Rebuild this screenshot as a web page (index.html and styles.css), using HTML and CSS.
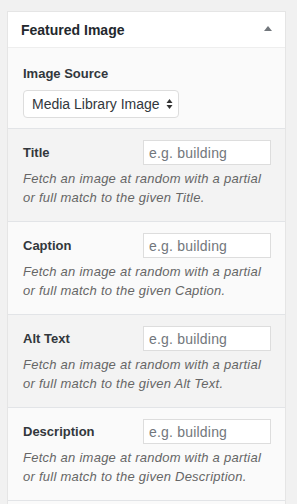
FILE: index.html
```html
<!DOCTYPE html>
<html lang="en">
<head>
  <meta charset="UTF-8">
  <meta name="viewport" content="width=device-width, initial-scale=1.0">
  <title>Featured Image</title>
  <link rel="stylesheet" href="styles.css">
</head>
<body>
  <div class="postbox">
    <div class="postbox-head">
      <h2>Featured Image</h2>
      <span class="toggle"></span>
    </div>
    <div class="source">
      <label class="source-label">Image Source</label>
      <div class="select">
        <span>Media Library Image</span>
        <svg width="7" height="12" viewBox="0 0 7 12"><path d="M3.5 1 L6.5 5 H0.5 Z M3.5 11 L6.5 7 H0.5 Z" fill="#333"/></svg>
      </div>
    </div>
    <div class="field dark">
      <div class="field-top">
        <label>Title</label>
        <input type="text" placeholder="e.g. building">
      </div>
      <p>Fetch an image at random with a partial or full match to the given Title.</p>
    </div>
    <div class="field">
      <div class="field-top">
        <label>Caption</label>
        <input type="text" placeholder="e.g. building">
      </div>
      <p>Fetch an image at random with a partial or full match to the given Caption.</p>
    </div>
    <div class="field dark">
      <div class="field-top">
        <label>Alt Text</label>
        <input type="text" placeholder="e.g. building">
      </div>
      <p>Fetch an image at random with a partial or full match to the given Alt Text.</p>
    </div>
    <div class="field">
      <div class="field-top">
        <label>Description</label>
        <input type="text" placeholder="e.g. building">
      </div>
      <p>Fetch an image at random with a partial or full match to the given Description.</p>
    </div>
    <div class="field tail"></div>
  </div>
</body>
</html>
```

FILE: styles.css
```css
*{
  margin:0;
  padding:0;
  box-sizing:border-box;
}
body{
  background-color:#f1f1f1;
  font-family:"Liberation Sans", Arial, sans-serif;
  color:#23282d;
  padding:11px 11px 0 7px;
}
.postbox{
  background:#fff;
  border:1px solid #e5e5e5;
  border-bottom:0;
}
.postbox-head{
  display:flex;
  align-items:center;
  justify-content:space-between;
  height:36px;
  padding:0 13px;
  border-bottom:1px solid #eee;
}
.postbox-head h2{
  font-size:14px;
  font-weight:bold;
  color:#23282d;
}
.toggle{
  width:0;
  height:0;
  border-left:4px solid transparent;
  border-right:4px solid transparent;
  border-bottom:5px solid #72777c;
  margin-top:-2px;
}
.source{
  background:#fafafa;
  height:81px;
  padding:18px 15px 0;
  border-bottom:1px solid #e2e4e7;
}
.source-label{
  display:block;
  font-size:13px;
  font-weight:bold;
  color:#32373c;
  margin-bottom:9px;
}
.select{
  display:inline-flex;
  align-items:center;
  justify-content:space-between;
  width:156px;
  height:28px;
  padding:0 5px 0 8px;
  background:#fff;
  border:1px solid #ddd;
  border-radius:4px;
  font-size:14px;
  color:#32373c;
}
.field{
  background:#fafafa;
  height:93px;
  padding:11px 14px 0 15px;
  border-bottom:1px solid #e2e4e7;
}
.field.dark{
  background:#f3f3f3;
}
.field.tail{
  height:5px;
  border-bottom:0;
}
.field-top{
  display:flex;
  align-items:center;
  justify-content:space-between;
  margin-bottom:4px;
}
.field-top label{
  font-size:13px;
  font-weight:bold;
  color:#32373c;
}
.field-top input{
  width:128px;
  height:25px;
  border:1px solid #ddd;
  background:#fff;
  padding:0 5px;
  font-family:inherit;
  font-size:14px;
  letter-spacing:0.2px;
}
.field-top input::placeholder{
  color:#72777c;
}
.field p{
  font-size:13px;
  font-style:italic;
  line-height:19px;
  letter-spacing:0.25px;
  color:#666;
}
```
